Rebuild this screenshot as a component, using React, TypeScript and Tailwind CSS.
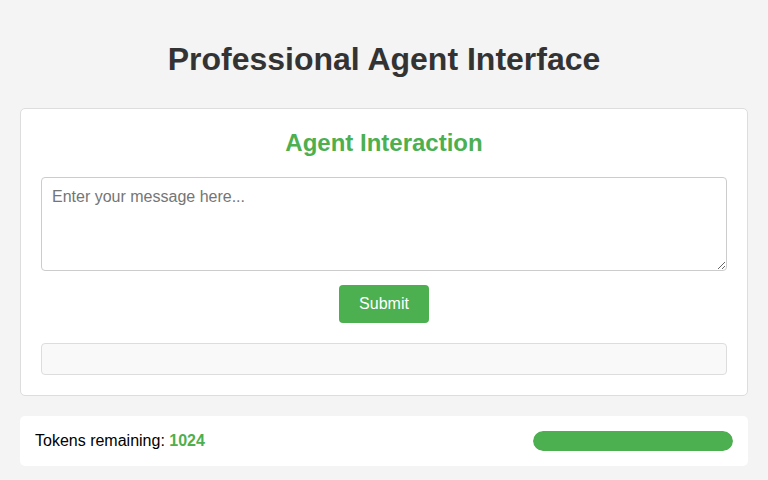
export default function App() {
  const tokens = 1024;
  const pct = 100;

  return (
    <div className="min-h-screen bg-[#f4f4f4] p-5 text-[#333] font-['Liberation_Sans',Arial,sans-serif]">
      <h1 className="mt-[21px] mb-[30px] text-center text-[32px] font-bold leading-[37px] text-[#333]">
        Professional Agent Interface
      </h1>

      {/* agent box */}
      <div className="rounded-[5px] border border-[#ddd] bg-white p-5">
        <h2 className="text-center text-2xl font-bold leading-[28px] text-[#4caf50]">
          Agent Interaction
        </h2>
        <div className="mt-5 flex flex-col items-center">
          <textarea
            className="block h-[94px] w-full rounded border border-[#ccc] p-[10px] text-base leading-[18px] text-[#333] placeholder:text-[#757575] outline-none"
            placeholder="Enter your message here..."
          />
          <button className="mt-[14px] h-[38px] rounded bg-[#4caf50] px-5 text-base text-white">
            Submit
          </button>
        </div>
        <div className="mt-5 h-[32px] rounded border border-[#ddd] bg-[#f9f9f9]"></div>
      </div>

      {/* tokens */}
      <div className="mt-5 flex items-center justify-between rounded-[5px] bg-white px-[15px] py-[15px]">
        <span className="text-base leading-[20px] text-black">
          Tokens remaining:{" "}
          <span className="font-bold text-[#4caf50]">{tokens}</span>
        </span>
        <div className="h-5 w-[200px] overflow-hidden rounded-[10px] bg-[#ddd]">
          <div className="h-full rounded-[10px] bg-[#4caf50]" style={{ width: `${pct}%` }} />
        </div>
      </div>
    </div>
  );
}
